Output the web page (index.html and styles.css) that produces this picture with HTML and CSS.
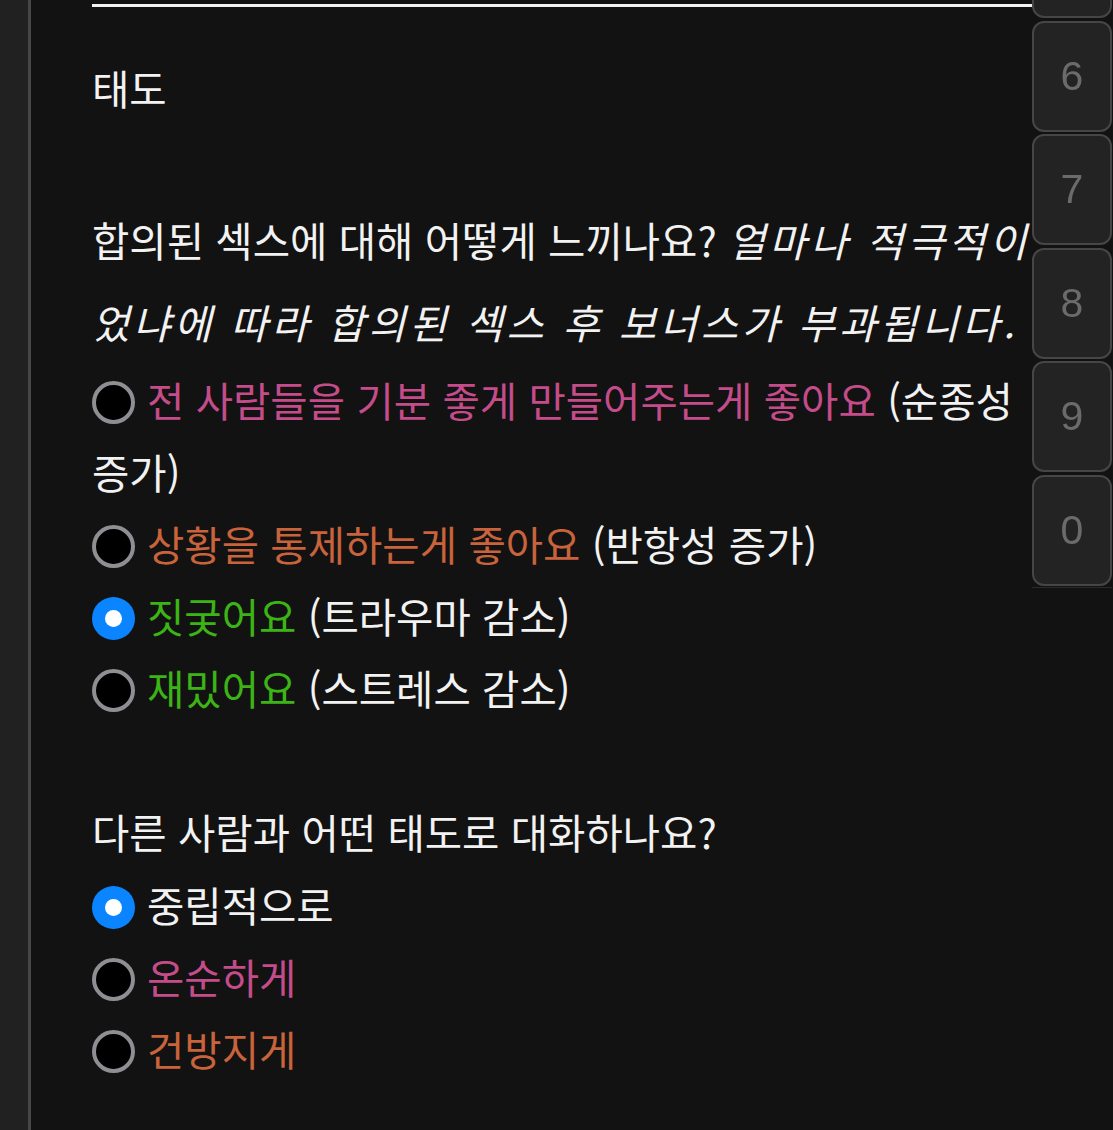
FILE: index.html
```html
<!DOCTYPE html>
<html lang="ko">
<head>
<meta charset="utf-8">
<link rel="stylesheet" href="styles.css">
</head>
<body>
<div class="app">
  <aside class="sidebar"></aside>
  <main class="content">
    <div class="rule"></div>
    <h2 class="heading">태도</h2>

    <p class="question">합의된 섹스에 대해 어떻게 느끼나요? <em>얼마나 적극적이었냐에 따라 합의된 섹스 후 보너스가 부과됩니다.</em></p>
    <div class="options">
      <div class="option"><span class="radio"></span><span class="pink">전 사람들을 기분 좋게 만들어주는게 좋아요</span> (순종성 증가)</div>
      <div class="option"><span class="radio"></span><span class="orange">상황을 통제하는게 좋아요</span> (반항성 증가)</div>
      <div class="option"><span class="radio checked"></span><span class="green">짓궂어요</span> (트라우마 감소)</div>
      <div class="option"><span class="radio"></span><span class="green">재밌어요</span> (스트레스 감소)</div>
    </div>

    <p class="question q2">다른 사람과 어떤 태도로 대화하나요?</p>
    <div class="options">
      <div class="option"><span class="radio checked"></span>중립적으로</div>
      <div class="option"><span class="radio"></span><span class="pink">온순하게</span></div>
      <div class="option"><span class="radio"></span><span class="orange">건방지게</span></div>
    </div>
  </main>
</div>

<nav class="keypad">
  <div class="key"></div>
  <div class="key">6</div>
  <div class="key">7</div>
  <div class="key">8</div>
  <div class="key">9</div>
  <div class="key">0</div>
</nav>
</body>
</html>
```
FILE: styles.css
```css
html, body {
  margin: 0;
  padding: 0;
  background: #121212;
  height: 100%;
  overflow: hidden;
}

body {
  font-family: "Noto Sans CJK KR", "Noto Sans", sans-serif;
  color: #f2f2f2;
  font-size: 40.6px;
}

.app {
  display: flex;
  min-height: 100%;
}

.sidebar {
  width: 28px;
  flex: none;
  background: #212121;
  border-right: 3px solid #474747;
}

.content {
  flex: 1;
  padding: 0 68px 0 61px;
}

.rule {
  height: 3px;
  margin-top: 4px;
  margin-right: -7px;
  background: #f2f2f2;
}

.heading {
  margin: 45px 0 0;
  font-size: 40.6px;
  font-weight: 400;
  line-height: 72px;
}

.question {
  margin: 75px 0 0;
  line-height: 82px;
}

.question em {
  font-style: italic;
  letter-spacing: 3.7px;
}

.q2 {
  margin-top: 72px;
  line-height: 72px;
}

.options {
  margin: 1px 0 0;
}

.option {
  line-height: 72px;
}

.radio {
  display: inline-block;
  box-sizing: border-box;
  width: 43px;
  height: 43px;
  border-radius: 50%;
  border: 4px solid #8e8e93;
  background: #000;
  vertical-align: middle;
  margin: -7px 12px 0 0;
  position: relative;
}

.radio.checked {
  border: none;
  background: #0a84ff;
}

.radio.checked::after {
  content: "";
  position: absolute;
  left: 50%;
  top: 50%;
  width: 17px;
  height: 17px;
  margin: -8.5px 0 0 -8.5px;
  border-radius: 50%;
  background: #fff;
}

.pink { color: #c54c8a; }
.orange { color: #c8633b; }
.green { color: #3cb415; }

.keypad {
  position: fixed;
  top: -93px;
  left: 1032px;
  width: 80px;
  display: flex;
  flex-direction: column;
  gap: 2.5px;
  border-bottom: 1px solid #2a2a2a;
  padding-bottom: 1px;
}

.key {
  box-sizing: border-box;
  height: 111px;
  background: #232323;
  border: 2px solid #464646;
  border-radius: 12px;
  display: flex;
  align-items: center;
  justify-content: center;
  font-family: "Liberation Sans", Arial, sans-serif;
  font-size: 41px;
  color: #6b6b6b;
}
```
